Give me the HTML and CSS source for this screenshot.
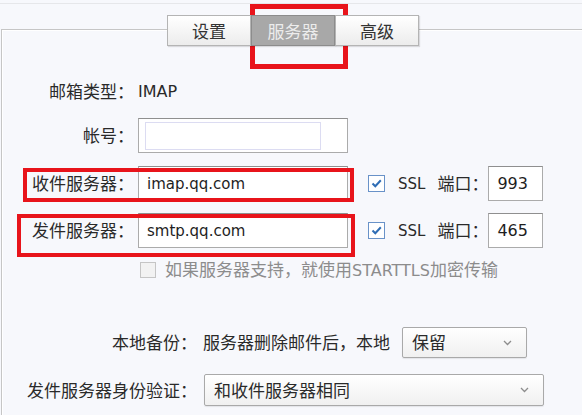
FILE: index.html
```html
<!DOCTYPE html>
<html lang="zh-CN">
<head>
<meta charset="utf-8">
<title>服务器设置</title>
<link rel="stylesheet" href="styles.css">
</head>
<body>
<div class="page">
  <div class="topline"></div>
  <div class="tabs">
    <div class="tab">设置</div>
    <div class="tab active">服务器</div>
    <div class="tab">高级</div>
  </div>
  <div class="panel">
    <div class="row r1">
      <div class="label">邮箱类型：</div><span class="en val">IMAP</span>
    </div>
    <div class="row r2">
      <div class="label">帐号：</div>
      <div class="field"><span class="autofill"></span></div>
    </div>
    <div class="row r3">
      <div class="label">收件服务器：</div>
      <div class="field">imap.qq.com</div>
      <span class="cb"><svg width="13" height="13" viewBox="0 0 13 13"><path d="M2.5 6.5 L5.3 9.3 L10.8 3.3" fill="none" stroke="#2f6db5" stroke-width="2"/></svg></span>
      <span class="en ssl">SSL</span>
      <span class="port-label">端口：</span>
      <div class="field port">993</div>
    </div>
    <div class="row r4">
      <div class="label">发件服务器：</div>
      <div class="field">smtp.qq.com</div>
      <span class="cb"><svg width="13" height="13" viewBox="0 0 13 13"><path d="M2.5 6.5 L5.3 9.3 L10.8 3.3" fill="none" stroke="#2f6db5" stroke-width="2"/></svg></span>
      <span class="en ssl">SSL</span>
      <span class="port-label">端口：</span>
      <div class="field port">465</div>
    </div>
    <div class="row r5">
      <span class="cb disabled"></span>
      <span class="hint">如果服务器支持，就使用<span class="en">STARTTLS</span>加密传输</span>
    </div>
    <div class="row r6">
      <div class="label wide">本地备份：</div>
      <span class="desc">服务器删除邮件后，本地</span>
      <div class="select small"><span>保留</span><svg width="9" height="6" viewBox="0 0 9 6"><path d="M1 1 L4.5 4.5 L8 1" fill="none" stroke="#8d8d8d" stroke-width="1.3"/></svg></div>
    </div>
    <div class="row r7">
      <div class="label wide">发件服务器身份验证：</div>
      <div class="select big"><span>和收件服务器相同</span><svg width="9" height="6" viewBox="0 0 9 6"><path d="M1 1 L4.5 4.5 L8 1" fill="none" stroke="#8d8d8d" stroke-width="1.3"/></svg></div>
    </div>
  </div>
  <div class="mark mark-tab"></div>
  <div class="mark mark-in"></div>
  <div class="mark mark-out"></div>
</div>
</body>
</html>
```
FILE: styles.css
```css
html, body {
  margin: 0;
  padding: 0;
}
body {
  background: #f7f8fc;
  font-family: "Noto Sans CJK SC", "DejaVu Sans", sans-serif;
  font-size: 17px;
  color: #2a2a2a;
  overflow: hidden;
}
.page {
  position: relative;
  width: 582px;
  height: 415px;
  overflow: hidden;
}
.topline {
  height: 3px;
  border-bottom: 1px solid #e6e7ea;
}
.tabs {
  display: flex;
  margin-left: 167px;
  margin-top: 11px;
  height: 31px;
  position: relative;
  z-index: 1;
}
.tab {
  box-sizing: border-box;
  width: 84px;
  height: 31px;
  display: flex;
  align-items: center;
  justify-content: center;
  border: 1px solid #b4b4b4;
  background: linear-gradient(#ffffff, #ececec);
  color: #333;
  box-shadow: 1px 1px 1px rgba(0, 0, 0, 0.12);
  line-height: 1;
}
.tab.active {
  background: #a8a8a8;
  border-color: #8c8c8c;
  color: #ececec;
}
.panel {
  margin-left: 1px;
  margin-top: -17px;
  height: 400px;
  border-top: 1px solid #c6c6c6;
  border-left: 1px solid #c6c6c6;
  box-shadow: inset 1px 1px 0 #ffffff;
}
.row {
  display: flex;
  align-items: center;
  height: 35px;
  line-height: 1.2;
}
.r1 { margin-top: 44px; }
.r2 { margin-top: 9px; }
.r3 { margin-top: 13px; }
.r4 { margin-top: 12px; }
.r5 { margin-top: 4px; }
.r6 { margin-top: 40px; height: 31px; }
.r7 { margin-top: 16px; height: 32px; }
.label {
  flex: none;
  width: 132px;
  text-align: right;
}
.label.wide {
  width: 195px;
}
.en {
  font-family: "DejaVu Sans", sans-serif;
  font-size: 16px;
}
.val {
  margin-left: 4px;
}
.field {
  box-sizing: border-box;
  flex: none;
  width: 210px;
  height: 35px;
  margin-left: 4px;
  padding-left: 8px;
  display: flex;
  align-items: center;
  background: #ffffff;
  border: 1px solid #ababab;
  border-top-color: #8f8f8f;
  font-family: "DejaVu Sans", sans-serif;
  font-size: 15px;
  color: #1e1e1e;
}
.autofill {
  box-sizing: border-box;
  width: 176px;
  height: 28px;
  margin-left: -2px;
  border: 1px solid #dcdcf2;
}
.field.port {
  width: 55px;
  margin-left: 0;
  font-size: 16px;
}
.cb {
  box-sizing: border-box;
  flex: none;
  width: 17px;
  height: 17px;
  margin-left: 20px;
  display: flex;
  align-items: center;
  justify-content: center;
  background: #ffffff;
  border: 1px solid #6992c8;
}
.cb.disabled {
  width: 16px;
  height: 16px;
  margin-left: 138px;
  background: #f2f2f2;
  border-color: #c5c5c5;
}
.ssl {
  margin-left: 13px;
  font-size: 15px;
}
.port-label {
  margin-left: 12px;
}
.hint {
  margin-left: 9px;
  color: #8c8c8c;
}
.desc {
  margin-left: 6px;
}
.select {
  box-sizing: border-box;
  flex: none;
  display: flex;
  align-items: center;
  justify-content: space-between;
  padding: 0 14px 0 9px;
  border: 1px solid #a9a9a9;
  border-radius: 2px;
  background: linear-gradient(#ffffff, #f0f0f0);
  box-shadow: 0 1px 1px rgba(0, 0, 0, 0.08);
}
.select.small {
  width: 125px;
  height: 31px;
  margin-left: 12px;
}
.select.big {
  width: 340px;
  height: 32px;
  margin-left: 7px;
}
.mark {
  position: absolute;
  box-sizing: border-box;
  border: 4px solid #e8141b;
}
.mark-tab {
  left: 250px;
  top: 4px;
  width: 98px;
  height: 65px;
  border-width: 5px;
}
.mark-in {
  left: 23px;
  top: 168px;
  width: 331px;
  height: 34px;
}
.mark-out {
  left: 17px;
  top: 214px;
  width: 338px;
  height: 43px;
}
```
